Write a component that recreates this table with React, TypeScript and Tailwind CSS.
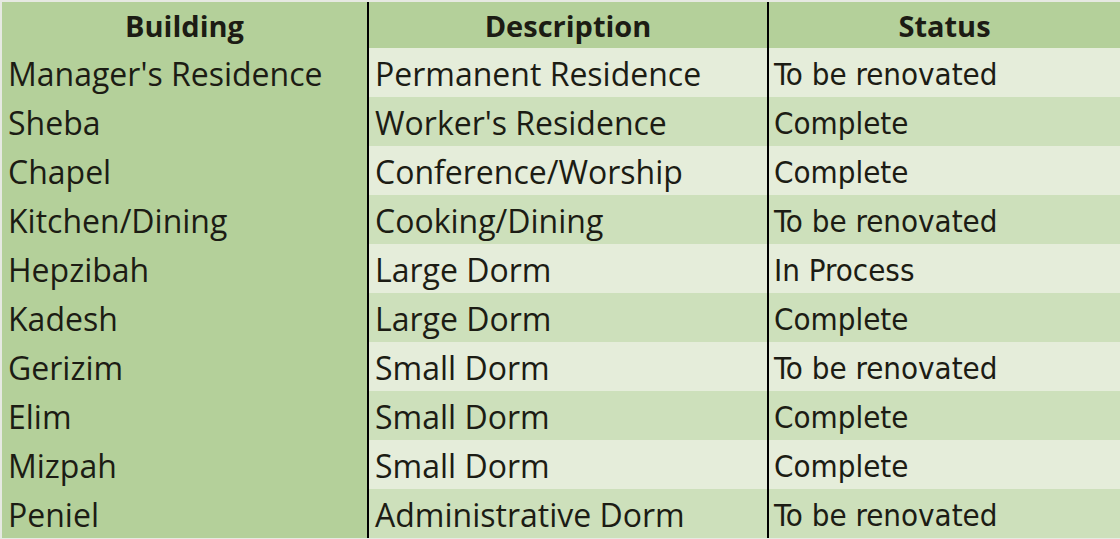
import React from 'react'

const ROWS = [
  ["Manager's Residence", 'Permanent Residence', 'To be renovated'],
  ['Sheba', "Worker's Residence", 'Complete'],
  ['Chapel', 'Conference/Worship', 'Complete'],
  ['Kitchen/Dining', 'Cooking/Dining', 'To be renovated'],
  ['Hepzibah', 'Large Dorm', 'In Process'],
  ['Kadesh', 'Large Dorm', 'Complete'],
  ['Gerizim', 'Small Dorm', 'To be renovated'],
  ['Elim', 'Small Dorm', 'Complete'],
  ['Mizpah', 'Small Dorm', 'Complete'],
  ['Peniel', 'Administrative Dorm', 'To be renovated'],
]

export default function App() {
  return (
    <div className="w-[1120px] h-[539px] overflow-hidden bg-[#e6e9e2] pt-[2px] pl-[2px] text-[#1c1c14]">
      {/* Header */}
      <div className="flex h-[46px] bg-[#b4d09a] font-['Open_Sans',sans-serif] font-bold text-[29px] leading-none">
        <div className="w-[365px] flex items-end justify-center pb-[8px]">Building</div>
        <div className="w-[2px] bg-black" />
        <div className="w-[398px] flex items-end justify-center pb-[8px]">Description</div>
        <div className="w-[2px] bg-black" />
        <div className="flex-1 flex items-end justify-center pb-[8px]">Status</div>
      </div>

      {/* Body */}
      {ROWS.map((r, i) => (
        <div key={i} className="flex h-[49px]">
          <div className="w-[365px] bg-[#b4d09a] flex items-end pl-[6px] pb-[7px] font-['Open_Sans',sans-serif] text-[32px] leading-none">
            {r[0]}
          </div>
          <div className="w-[2px] bg-black" />
          <div
            className={`w-[398px] flex items-end pl-[6px] pb-[7px] font-['Open_Sans',sans-serif] text-[32px] leading-none ${
              i % 2 === 0 ? 'bg-[#e5edda]' : 'bg-[#cde0bb]'
            }`}
          >
            {r[1]}
          </div>
          <div className="w-[2px] bg-black" />
          <div
            className={`flex-1 flex items-end pl-[5px] pb-[7px] font-['DejaVu_Sans',sans-serif] font-stretch-condensed text-[31px] leading-none ${
              i % 2 === 0 ? 'bg-[#e5edda]' : 'bg-[#cde0bb]'
            }`}
          >
            {r[2]}
          </div>
        </div>
      ))}
    </div>
  )
}
